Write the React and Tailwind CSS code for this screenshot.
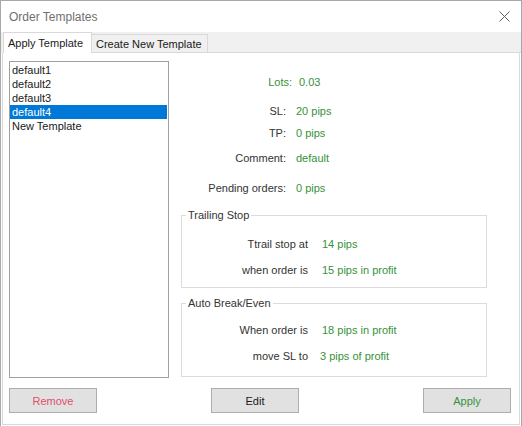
import React from "react";

const green = "text-[#35923a]";

function Row({ label, value, labelW, gap, className = "" }) {
  return (
    <div className={"flex items-center h-[14px] " + className}>
      <span className="text-right text-[#333] shrink-0" style={{ width: labelW }}>
        {label}
      </span>
      <span className={green} style={{ marginLeft: gap }}>
        {value}
      </span>
    </div>
  );
}

function Group({ title, children, className = "" }) {
  return (
    <fieldset className={"border border-[#dcdcdc] w-[306px] " + className}>
      <legend className="ml-[4px] px-[2px] leading-[14px] text-[#333]">{title}</legend>
      {children}
    </fieldset>
  );
}

export default function App() {
  const items = ["default1", "default2", "default3", "default4", "New Template"];
  return (
    <div className="w-[522px] h-[426px] bg-white border-l border-r border-t border-[#a8a8a8] flex flex-col font-['Liberation_Sans',Arial,sans-serif] text-[11px] leading-[14px]">
      <div className="h-[31px] shrink-0 flex items-center justify-between pl-[8px] pr-[10px]">
        <span className="text-[12px] text-[#707070]">Order Templates</span>
        <svg width="11" height="11" viewBox="0 0 11 11" className="mr-[1px]">
          <path d="M0.5 0.5 L10.5 10.5 M10.5 0.5 L0.5 10.5" stroke="#606060" strokeWidth="1" />
        </svg>
      </div>
      <div className="h-[21px] shrink-0 bg-[#f0f0f0] flex items-end pl-[2px] relative z-10">
        <div className="h-[21px] w-[89px] bg-white border-t border-l border-r border-[#d9d9d9] flex items-center pl-[4px] text-[#1a1a1a]">
          Apply Template
        </div>
        <div className="h-[19px] w-[116px] bg-[#f0f0f0] border-t border-r border-b border-[#d9d9d9] flex items-center pl-[4px] text-[#1a1a1a]">
          Create New Template
        </div>
        <div className="flex-1 border-b border-[#d9d9d9] h-[1px]" />
      </div>
      <div className="flex-1 bg-white border-l border-r border-b border-[#d9d9d9] mx-[1px] mb-[1px] flex flex-col">
        <div className="flex pt-[8px] pl-[6px]">
          <div className="w-[160px] h-[317px] border border-[#a0a0a0] pt-[1px] shrink-0">
            {items.map((it) => (
              <div
                key={it}
                className={
                  "h-[14px] pl-[2px] flex items-center " +
                  (it === "default4" ? "bg-[#0078d7] text-white mr-[1px]" : "text-[#1a1a1a]")
                }
              >
                {it}
              </div>
            ))}
          </div>
          <div className="ml-[12px] flex flex-col">
            <Row label="Lots:" value="0.03" labelW={111} gap={7} className={"mt-[14px] [&>span:first-child]:text-[#35923a]"} />
            <Row label="SL:" value="20 pips" labelW={105} gap={10} className="mt-[15px]" />
            <Row label="TP:" value="0 pips" labelW={105} gap={10} className="mt-[8px]" />
            <Row label="Comment:" value="default" labelW={105} gap={10} className="mt-[11px]" />
            <Row label="Pending orders:" value="0 pips" labelW={105} gap={10} className="mt-[16px]" />
            <Group title="Trailing Stop" className="mt-[13px] pb-[10px]">
              <Row label="Ttrail stop at" value="14 pips" labelW={126} gap={14} className="mt-[15px]" />
              <Row label="when order is" value="15 pips in profit" labelW={126} gap={14} className="mt-[12px]" />
            </Group>
            <Group title="Auto Break/Even" className="mt-[8px] pb-[13px]">
              <Row label="When order is" value="18 pips in profit" labelW={126} gap={14} className="mt-[13px]" />
              <Row label="move SL to" value="3 pips of profit" labelW={126} gap={12} className="mt-[12px]" />
            </Group>
          </div>
        </div>
        <div className="flex mt-[10px] pl-[6px]">
          <button className="w-[88px] h-[25px] bg-[#e1e1e1] border border-[#adadad] text-[#e0506a]">Remove</button>
          <button className="w-[88px] h-[25px] bg-[#e1e1e1] border border-[#adadad] text-[#1a1a1a] ml-[114px]">Edit</button>
          <button className="w-[88px] h-[25px] bg-[#e1e1e1] border border-[#adadad] text-[#35923a] ml-[124px]">Apply</button>
        </div>
      </div>
    </div>
  );
}
